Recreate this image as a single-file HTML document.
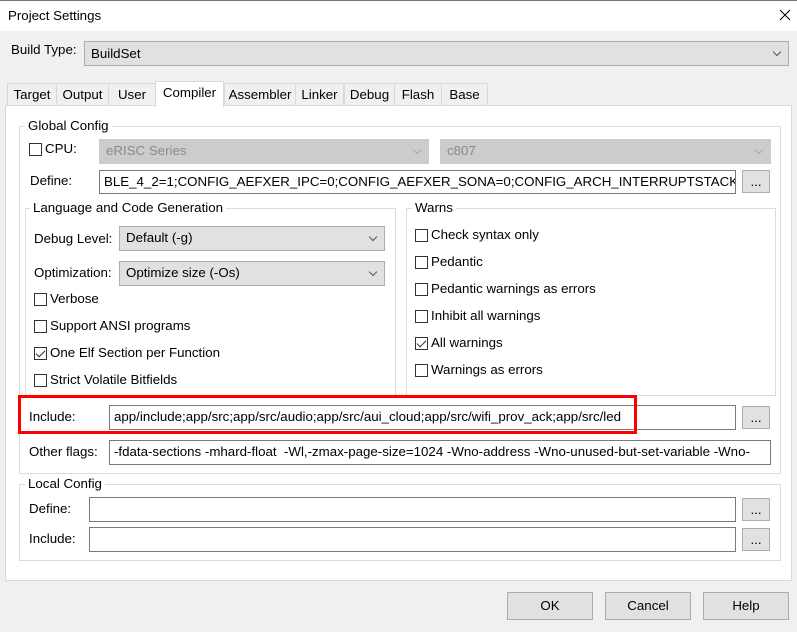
<!DOCTYPE html>
<html><head><meta charset="utf-8"><style>
*{box-sizing:border-box;margin:0;padding:0}
body{width:797px;height:632px;background:#f0f0f0;position:relative;overflow:hidden;font-family:"Liberation Sans","Noto Sans CJK SC",sans-serif;font-size:13.3px;color:#000}
.a{position:absolute;white-space:nowrap}
.t{position:absolute;white-space:nowrap;line-height:16px}
.cb{position:absolute;width:13px;height:13px;border:1px solid #333;background:#fff}
.combo{position:absolute;background:#e1e1e1;border:1px solid #adadad;padding-left:6px;line-height:22px}
.dis{background:#cccccc;border-color:#cccccc;color:#8a8a8a}
.chev{position:absolute;right:8px;top:7px;width:6px;height:6px;border-right:1px solid #555;border-bottom:1px solid #555;transform:rotate(45deg)}
.dis .chev{border-color:#a8a8a8}
.inp{position:absolute;background:#fff;border:1px solid #7a7a7a;padding-left:4px;line-height:21px;overflow:hidden}
.btn{position:absolute;background:#e1e1e1;border:1px solid #adadad;text-align:center}
.grp{position:absolute;border:1px solid #dcdcdc}
.gt{position:absolute;background:#fff;padding:0 3px;line-height:14px;top:-8px}
.tab{position:absolute;top:83px;height:22px;border:1px solid #d9d9d9;border-bottom:none;background:#f0f0f0;text-align:center;line-height:21px}
.ck::after{content:"";position:absolute;left:3px;top:0px;width:4px;height:8px;border-right:1px solid #333;border-bottom:1px solid #333;transform:rotate(45deg)}
</style></head><body>
<div class="a" style="left:0;top:0;width:797px;height:31px;background:#fff;border-top:1px solid #777"></div>
<div class="t" style="left:8px;top:8px">Project Settings</div>
<svg class="a" style="left:779px;top:9px" width="12" height="12"><path d="M1 1L11 11M11 1L1 11" stroke="#000" stroke-width="1"/></svg>

<div class="t" style="left:11px;top:42px">Build Type:</div>
<div class="combo" style="left:84px;top:41px;width:705px;height:25px;line-height:23px">BuildSet<div class="chev"></div></div>

<div class="a" style="left:5px;top:105px;width:787px;height:476px;background:#fff;border:1px solid #d9d9d9"></div>
<div class="tab" style="left:7px;width:50px">Target</div>
<div class="tab" style="left:56px;width:53px">Output</div>
<div class="tab" style="left:108px;width:48px">User</div>
<div class="tab" style="left:224px;width:72px">Assembler</div>
<div class="tab" style="left:295px;width:49px">Linker</div>
<div class="tab" style="left:344px;width:51px">Debug</div>
<div class="tab" style="left:394px;width:48px">Flash</div>
<div class="tab" style="left:441px;width:47px">Base</div>
<div class="tab" style="left:155px;width:69px;top:81px;height:26px;background:#fff;line-height:22px">Compiler</div>

<div class="grp" style="left:19px;top:126px;width:762px;height:348px"><div class="gt" style="left:5px">Global Config</div></div>
<div class="cb" style="left:29px;top:143px"></div>
<div class="t" style="left:45px;top:141px">CPU:</div>
<div class="combo dis" style="left:99px;top:139px;width:330px;height:25px">eRISC Series<div class="chev"></div></div>
<div class="combo dis" style="left:440px;top:139px;width:331px;height:25px">c807<div class="chev"></div></div>
<div class="t" style="left:30px;top:173px">Define:</div>
<div class="inp" style="left:99px;top:170px;width:637px;height:24px">BLE_4_2=1;CONFIG_AEFXER_IPC=0;CONFIG_AEFXER_SONA=0;CONFIG_ARCH_INTERRUPTSTACK=4096;CONFIG</div>
<div class="btn" style="left:742px;top:170px;width:28px;height:23px;line-height:21px">...</div>

<div class="grp" style="left:25px;top:208px;width:371px;height:188px"><div class="gt" style="left:4px">Language and Code Generation</div></div>
<div class="t" style="left:34px;top:231px">Debug Level:</div>
<div class="combo" style="left:119px;top:226px;width:266px;height:25px">Default (-g)<div class="chev"></div></div>
<div class="t" style="left:34px;top:265px">Optimization:</div>
<div class="combo" style="left:119px;top:261px;width:266px;height:25px">Optimize size (-Os)<div class="chev"></div></div>
<div class="cb" style="left:34px;top:293px"></div><div class="t" style="left:50px;top:291px">Verbose</div>
<div class="cb" style="left:34px;top:320px"></div><div class="t" style="left:50px;top:318px">Support ANSI programs</div>
<div class="cb ck" style="left:34px;top:347px"></div><div class="t" style="left:50px;top:345px">One Elf Section per Function</div>
<div class="cb" style="left:34px;top:374px"></div><div class="t" style="left:50px;top:372px">Strict Volatile Bitfields</div>

<div class="grp" style="left:406px;top:208px;width:370px;height:188px"><div class="gt" style="left:5px">Warns</div></div>
<div class="cb" style="left:415px;top:229px"></div><div class="t" style="left:431px;top:227px">Check syntax only</div>
<div class="cb" style="left:415px;top:256px"></div><div class="t" style="left:431px;top:254px">Pedantic</div>
<div class="cb" style="left:415px;top:283px"></div><div class="t" style="left:431px;top:281px">Pedantic warnings as errors</div>
<div class="cb" style="left:415px;top:310px"></div><div class="t" style="left:431px;top:308px">Inhibit all warnings</div>
<div class="cb ck" style="left:415px;top:337px"></div><div class="t" style="left:431px;top:335px">All warnings</div>
<div class="cb" style="left:415px;top:364px"></div><div class="t" style="left:431px;top:362px">Warnings as errors</div>

<div class="t" style="left:29px;top:409px">Include:</div>
<div class="inp" style="left:109px;top:405px;width:627px;height:25px">app/include;app/src;app/src/audio;app/src/aui_cloud;app/src/wifi_prov_ack;app/src/led</div>
<div class="btn" style="left:742px;top:406px;width:28px;height:23px;line-height:21px">...</div>
<div class="a" style="left:18px;top:395px;width:619px;height:39px;border:3px solid #f00"></div>
<div class="t" style="left:29px;top:444px">Other flags:</div>
<div class="inp" style="left:109px;top:440px;width:662px;height:25px">-fdata-sections -mhard-float &nbsp;-Wl,-zmax-page-size=1024 -Wno-address -Wno-unused-but-set-variable -Wno-maybe</div>

<div class="grp" style="left:19px;top:484px;width:762px;height:77px"><div class="gt" style="left:5px">Local Config</div></div>
<div class="t" style="left:29px;top:501px">Define:</div>
<div class="inp" style="left:89px;top:497px;width:647px;height:25px"></div>
<div class="btn" style="left:742px;top:498px;width:28px;height:23px;line-height:21px">...</div>
<div class="t" style="left:29px;top:531px">Include:</div>
<div class="inp" style="left:89px;top:527px;width:647px;height:25px"></div>
<div class="btn" style="left:742px;top:528px;width:28px;height:23px;line-height:21px">...</div>

<div class="btn" style="left:507px;top:592px;width:86px;height:28px;line-height:26px">OK</div>
<div class="btn" style="left:605px;top:592px;width:86px;height:28px;line-height:26px">Cancel</div>
<div class="btn" style="left:703px;top:592px;width:86px;height:28px;line-height:26px">Help</div>
</body></html>
